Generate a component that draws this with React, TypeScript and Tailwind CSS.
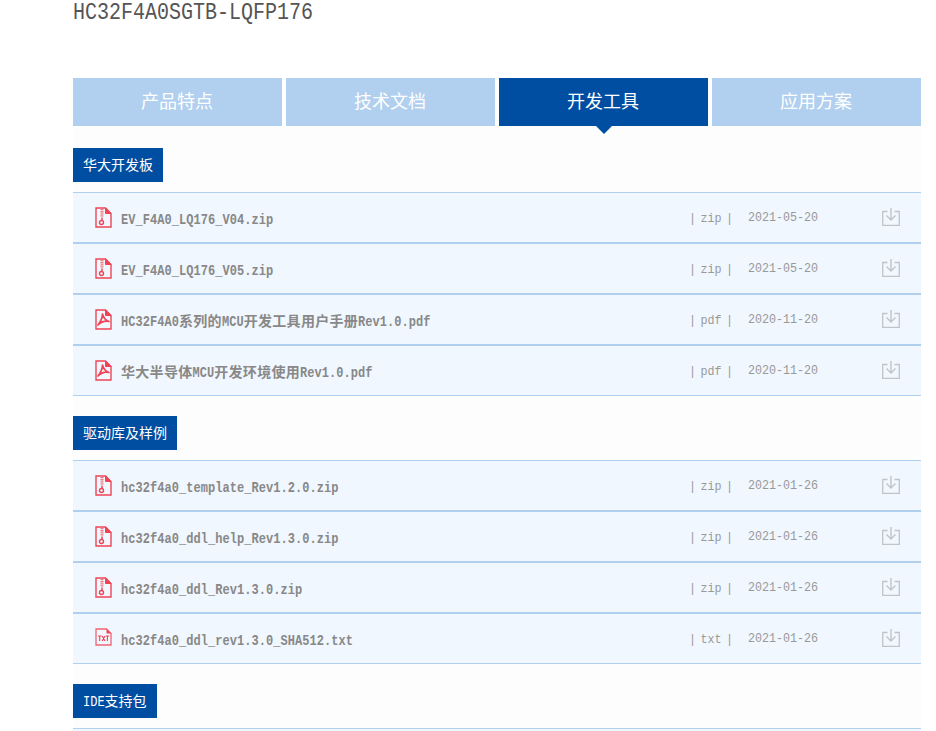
import React from "react";

const Cjk = ({ text, tag }: { text: string; tag?: boolean }) => (
  <>
    {text.split(/([\u4e00-\u9fff]+)/).map((p, i) =>
      /[\u4e00-\u9fff]/.test(p) ? (
        <span key={i} className={tag ? "text-[14px]" : "text-[14px] tracking-[0.3px]"}>{p}</span>
      ) : (
        <span key={i} className="inline-block scale-y-[1.15]">{p}</span>
      )
    )}
  </>
);

const FileBase = ({ children }: { children?: React.ReactNode }) => (
  <svg width="17" height="21" viewBox="0 0 17 21" fill="none" className="shrink-0">
    <path d="M1 1H10.5L16 6.5V20H1Z" stroke="#ee4455" strokeWidth="1.4" />
    <path d="M10.5 1V6.5H16Z" fill="#ee4455" stroke="#ee4455" strokeWidth="1" />
    {children}
  </svg>
);

const ZipIcon = () => (
  <FileBase>
    <path d="M7 2V10" stroke="#ee7782" strokeWidth="3" strokeDasharray="1.3 0.8" />
    <path d="M7 10.5V13" stroke="#ee4455" strokeWidth="1.5" />
    <circle cx="6.5" cy="15.5" r="2" stroke="#ee4455" strokeWidth="1.4" />
  </FileBase>
);

const PdfIcon = () => (
  <FileBase>
    <path d="M7.5 5C7.5 9 6 12 3 16C6 13 10 11.5 14 12.5C11 11.5 8.5 9 7.5 5Z" stroke="#ee4455" strokeWidth="1.7" strokeLinejoin="round" />
  </FileBase>
);

const TxtIcon = () => (
  <svg width="17" height="21" viewBox="0 0 17 21" fill="none" className="shrink-0">
    <path d="M1 1H11.5L16 5.5V17H1Z" stroke="#ee6672" strokeWidth="1.3" />
    <path d="M11.5 1V5.5H16Z" fill="#ee4455" />
    <path d="M3 8H6.5M4.7 8V13M7.2 8L10 13M10 8L7.2 13M10.7 8H14.2M12.4 8V13" stroke="#ee4455" strokeWidth="1.1" />
  </svg>
);

const DownloadIcon = () => (
  <svg width="18" height="18" viewBox="0 0 18 18" fill="none" className="shrink-0 -translate-y-px">
    <path d="M5.5 3.5H0.7V17.3H17.3V3.5H12.5" stroke="#c0c4c8" strokeWidth="1.3" />
    <path d="M9 0V11.5M4.5 7.5L9 12L13.5 7.5" stroke="#c0c4c8" strokeWidth="1.4" />
  </svg>
);

type Row = { name: string; type: string; date: string; icon: "zip" | "pdf" | "txt" };

const FileRow = ({ row, first, last }: { row: Row; first: boolean; last: boolean }) => (
  <div
    className={`flex items-center border-[#b1cfee] bg-[#f0f7ff] pl-[22px] pr-[21px] ${first ? "h-[52px] border-t border-b-2" : last ? "h-[50px] border-b" : "h-[51px] border-b-2"}`}
  >
    <div className="flex w-[26px] shrink-0">
      {row.icon === "zip" ? <ZipIcon /> : row.icon === "pdf" ? <PdfIcon /> : <TxtIcon />}
    </div>
    <div className="flex-1 translate-y-[3px] font-['Liberation_Mono','Noto_Sans_CJK_SC',monospace] text-[12px] tracking-[0.05px] font-bold text-[#888888]">
      <Cjk text={row.name} />
    </div>
    <div className="flex w-[44px] translate-y-[2px] scale-y-[1.15] justify-between font-['Liberation_Mono',monospace] text-[11.7px] text-[#999999]">
      <span>|</span>
      <span>{row.type}</span>
      <span>|</span>
    </div>
    <div className="ml-[15px] w-[134px] translate-y-px scale-y-[1.15] font-['Liberation_Mono',monospace] text-[11.7px] text-[#999999]">{row.date}</div>
    <DownloadIcon />
  </div>
);

const SectionTag = ({ children }: { children: string }) => (
  <div className="flex">
    <div className="flex h-[34px] items-center bg-[#004ea2] px-2.5 pt-0.5 font-['Liberation_Mono','Noto_Sans_CJK_SC',monospace] text-[12px] text-white">
      <div><Cjk text={children} tag /></div>
    </div>
  </div>
);

const tabs = ["产品特点", "技术文档", "开发工具", "应用方案"];

const s1: Row[] = [
  { name: "EV_F4A0_LQ176_V04.zip", type: "zip", date: "2021-05-20", icon: "zip" },
  { name: "EV_F4A0_LQ176_V05.zip", type: "zip", date: "2021-05-20", icon: "zip" },
  { name: "HC32F4A0系列的MCU开发工具用户手册Rev1.0.pdf", type: "pdf", date: "2020-11-20", icon: "pdf" },
  { name: "华大半导体MCU开发环境使用Rev1.0.pdf", type: "pdf", date: "2020-11-20", icon: "pdf" },
];
const s2: Row[] = [
  { name: "hc32f4a0_template_Rev1.2.0.zip", type: "zip", date: "2021-01-26", icon: "zip" },
  { name: "hc32f4a0_ddl_help_Rev1.3.0.zip", type: "zip", date: "2021-01-26", icon: "zip" },
  { name: "hc32f4a0_ddl_Rev1.3.0.zip", type: "zip", date: "2021-01-26", icon: "zip" },
  { name: "hc32f4a0_ddl_rev1.3.0_SHA512.txt", type: "txt", date: "2021-01-26", icon: "txt" },
];

const List = ({ rows }: { rows: Row[] }) => (
  <div className="mt-2.5">
    {rows.map((r, i) => (
      <FileRow key={r.name} row={r} first={i === 0} last={i === rows.length - 1} />
    ))}
  </div>
);

export default function App() {
  return (
    <div className="h-[731px] overflow-hidden bg-white pl-[73px] pr-[15px]">
      <div className="h-[78px]">
        <h1 className="origin-top scale-y-[1.2] pt-[1px] font-['Liberation_Mono',monospace] text-[20px] leading-[20px] font-normal text-[#555555]">HC32F4A0SGTB-LQFP176</h1>
      </div>
      <div className="flex gap-1">
        {tabs.map((t, i) => (
          <div key={t} className={`relative flex h-12 flex-1 items-center justify-center pb-1 pr-px font-['Noto_Sans_CJK_SC',sans-serif] text-[18px] text-white ${i === 2 ? "bg-[#004ea2]" : "bg-[#b1cfee]"}`}>
            {t}
            {i === 2 && (
              <span className="absolute left-1/2 top-full -ml-2 border-x-8 border-t-8 border-x-transparent border-t-[#004ea2]" />
            )}
          </div>
        ))}
      </div>
      <div className="bg-[#fdfdfd] pt-[22px]">
        <SectionTag>华大开发板</SectionTag>
        <List rows={s1} />
        <div className="mt-5"><SectionTag>驱动库及样例</SectionTag></div>
        <List rows={s2} />
        <div className="mt-5"><SectionTag>IDE支持包</SectionTag></div>
        <div className="mt-2.5 h-[40px] border-t border-[#b1cfee] bg-[#f0f7ff]" />
      </div>
    </div>
  );
}
